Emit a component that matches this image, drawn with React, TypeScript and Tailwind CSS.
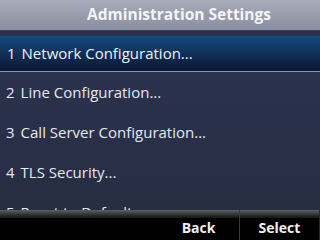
const items = [
  "Network Configuration...",
  "Line Configuration...",
  "Call Server Configuration...",
  "TLS Security...",
  "Reset to Default...",
];

export default function App() {
  return (
    <div
      className="relative w-[320px] h-[240px] overflow-hidden flex flex-col bg-[#283049]"
      style={{ fontFamily: '"Open Sans", "DejaVu Sans", sans-serif' }}
    >
      <div className="h-[30px] shrink-0 flex items-center pl-[87px] bg-gradient-to-b from-[#a7abba] to-[#8a8ea0] text-[#f4f5f8] text-[15.5px] font-bold">
        Administration Settings
      </div>
      <div className="h-[1px] shrink-0 bg-[#3a4058]" />
      <div className="h-[5px] shrink-0 bg-[#2b3250]" />
      <div className="flex-1 flex flex-col bg-gradient-to-b from-[#2c3350] to-[#262c40]">
        {items.map((label, i) => (
          <div
            key={label}
            className={
              i === 0
                ? "h-[36px] shrink-0 flex items-center gap-[6px] pl-[7px] text-[15px] text-[#eef1f5] bg-gradient-to-b from-[#124c82] to-[#0b1630] border-b border-[#8e94a4]"
                : "h-[40px] shrink-0 flex items-center gap-[6px] pl-[6px] text-[15px] text-[#e6e9ee]"
            }
          >
            <span>{i + 1}</span>
            <span>{label}</span>
          </div>
        ))}
      </div>
      <div className="absolute left-0 bottom-0 w-[320px] h-[30px] flex bg-black">
        <div className="absolute left-0 top-0 w-full h-[8px] bg-gradient-to-b from-[#5e6262] to-[#141414]" />
        <div className="w-[160px]" />
        <div className="relative w-[79px] flex items-center justify-center pt-[4px] pr-[2px] text-[#eeeeee] text-[14px] font-bold">
          Back
        </div>
        <div className="relative w-[1px] bg-[#3a3a3a]" />
        <div className="relative w-[79px] flex items-center justify-center pt-[4px] text-[#eeeeee] text-[14px] font-bold">
          Select
        </div>
        <div className="relative w-[1px] bg-[#2a2a2a]" />
      </div>
    </div>
  );
}
